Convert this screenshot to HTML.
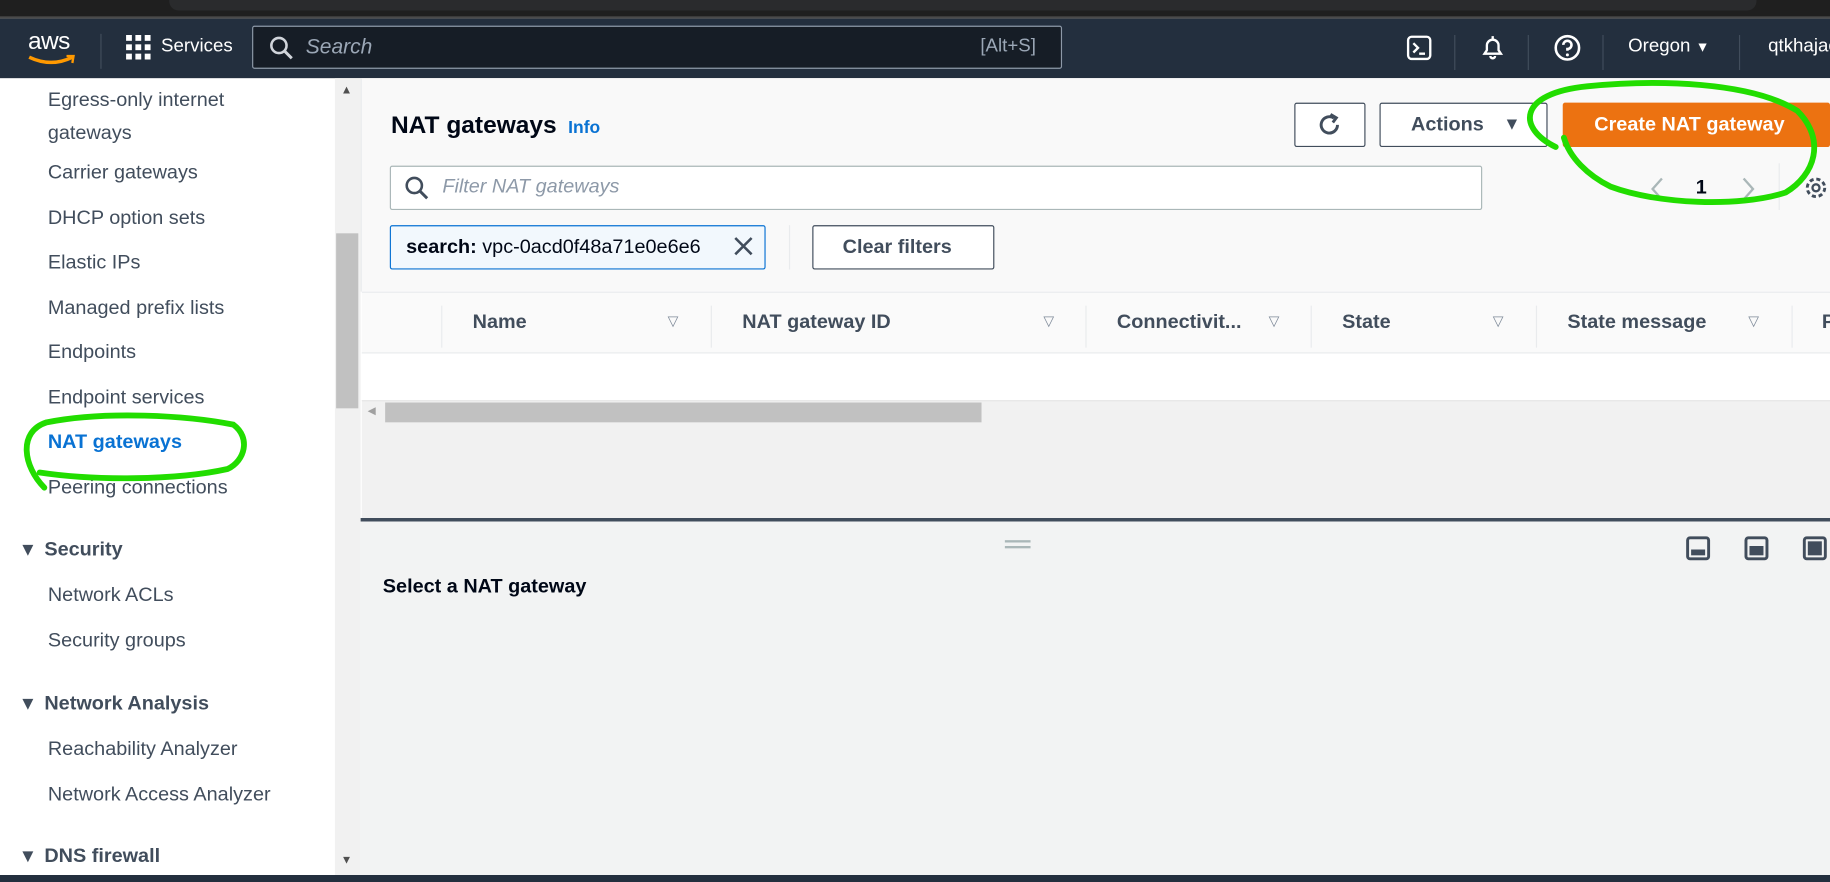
<!DOCTYPE html>
<html><head><meta charset="utf-8"><style>
*{box-sizing:border-box;margin:0;padding:0}
html,body{width:1830px;height:882px;overflow:hidden;background:#fff}
#w{position:absolute;left:0;top:0;width:1568px;height:756px;transform:scale(1.16709,1.16667);transform-origin:0 0;font-family:"Liberation Sans",sans-serif;overflow:hidden}
.a{position:absolute}
.side{font-size:17px;color:#414d5c;white-space:nowrap}
.hd{font-size:17px;color:#414d5c;font-weight:bold;white-space:nowrap}
.hd span{font-size:16px;display:inline-block;width:22px}
.th{font-size:17px;color:#414d5c;font-weight:bold;top:266px;white-space:nowrap}
.tri{font-size:12px;color:#7d8998;top:268px}
.sep{width:1px;height:36px;background:#e9ebed;top:262px}
</style></head><body><div id="w">
<div class="a" style="left:0;top:0;width:1568px;height:16px;background:#1f1f1f"></div>
<div class="a" style="left:145px;top:0;width:1360px;height:9px;background:#2a2b2d;border-radius:0 0 8px 8px"></div>
<div class="a" style="left:0;top:14px;width:1568px;height:2px;background:#4a4a4a"></div>
<div class="a" style="left:0;top:16px;width:1568px;height:51px;background:#232f3e"></div>
<div class="a" style="left:24px;top:24px;color:#fff;font-size:21px;letter-spacing:-0.5px">aws</div>
<svg class="a" style="left:22px;top:46px" width="44" height="12"><path d="M3 3 Q22 12 40 3" stroke="#ff9900" stroke-width="3" fill="none"/><path d="M35 2 L41 2 L40 8" stroke="#ff9900" stroke-width="2" fill="none"/></svg>
<div class="a" style="left:86px;top:29px;width:1px;height:30px;background:#414d5c"></div>
<svg class="a" style="left:108px;top:30px" width="22" height="22" fill="#fff"><rect x="0" y="0" width="5" height="5"/><rect x="8" y="0" width="5" height="5"/><rect x="16" y="0" width="5" height="5"/><rect x="0" y="8" width="5" height="5"/><rect x="8" y="8" width="5" height="5"/><rect x="16" y="8" width="5" height="5"/><rect x="0" y="16" width="5" height="5"/><rect x="8" y="16" width="5" height="5"/><rect x="16" y="16" width="5" height="5"/></svg>
<div class="a" style="left:138px;top:31px;color:#fff;font-size:16px">Services</div>
<div class="a" style="left:216px;top:22px;width:694px;height:37px;background:#161d26;border:1px solid #8d99a8;border-radius:2px"></div>
<svg class="a" style="left:230px;top:30px" width="22" height="22"><circle cx="9" cy="9" r="6.5" stroke="#d1d5db" stroke-width="2.2" fill="none"/><path d="M14 14 L20 20" stroke="#d1d5db" stroke-width="2.5"/></svg>
<div class="a" style="left:262px;top:30px;color:#9ba7b6;font-size:18px;font-style:italic">Search</div>
<div class="a" style="left:840px;top:31px;color:#9ba7b6;font-size:16px">[Alt+S]</div>
<svg class="a" style="left:1205px;top:30px" width="22" height="22"><rect x="1.5" y="1.5" width="19" height="19" rx="3" stroke="#fff" stroke-width="2" fill="none"/><path d="M6 7 L10 11 L6 15 M11 16 H16" stroke="#fff" stroke-width="2" fill="none"/></svg>
<div class="a" style="left:1246px;top:30px;width:1px;height:30px;background:#414d5c"></div>
<svg class="a" style="left:1268px;top:29px" width="22" height="24"><path d="M4 17 L6 14 V10 A5 5 0 0 1 16 10 V14 L18 17 Z" stroke="#fff" stroke-width="2" fill="none"/><path d="M9 19 A2 2 0 0 0 13 19" stroke="#fff" stroke-width="2" fill="none"/><path d="M11 2 V5" stroke="#fff" stroke-width="2"/></svg>
<div class="a" style="left:1309px;top:30px;width:1px;height:30px;background:#414d5c"></div>
<svg class="a" style="left:1331px;top:29px" width="24" height="24"><circle cx="12" cy="12" r="10" stroke="#fff" stroke-width="2.2" fill="none"/><path d="M8.5 9.5 A3.5 3.5 0 1 1 12 13 V14.5" stroke="#fff" stroke-width="2.2" fill="none"/><circle cx="12" cy="18" r="1.3" fill="#fff"/></svg>
<div class="a" style="left:1373px;top:30px;width:1px;height:30px;background:#414d5c"></div>
<div class="a" style="left:1395px;top:31px;color:#fff;font-size:16px">Oregon <span style="font-size:12px">▼</span></div>
<div class="a" style="left:1490px;top:30px;width:1px;height:30px;background:#414d5c"></div>
<div class="a" style="left:1515px;top:31px;color:#fff;font-size:16px;white-space:nowrap">qtkhajac</div>
<div class="a" style="left:287px;top:67px;width:22px;height:683px;background:#f1f1f1"></div>
<div class="a" style="left:288px;top:200px;width:19px;height:150px;background:#c1c1c1"></div>
<div class="a" style="left:292px;top:72px;font-size:10px;color:#505050">▲</div>
<div class="a" style="left:292px;top:732px;font-size:10px;color:#505050">▼</div>
<div class="a side" style="left:41px;top:72px;line-height:28px">Egress-only internet<br>gateways</div>
<div class="a side" style="left:41px;top:138px">Carrier gateways</div>
<div class="a side" style="left:41px;top:177px">DHCP option sets</div>
<div class="a side" style="left:41px;top:215px">Elastic IPs</div>
<div class="a side" style="left:41px;top:254px">Managed prefix lists</div>
<div class="a side" style="left:41px;top:292px">Endpoints</div>
<div class="a side" style="left:41px;top:331px">Endpoint services</div>
<div class="a side" style="left:41px;top:369px;color:#0972d3;font-weight:bold">NAT gateways</div>
<div class="a side" style="left:41px;top:408px">Peering connections</div>
<div class="a hd" style="left:16px;top:461px"><span>▼</span>Security</div>
<div class="a hd" style="left:16px;top:593px"><span>▼</span>Network Analysis</div>
<div class="a hd" style="left:16px;top:724px"><span>▼</span>DNS firewall</div>
<div class="a side" style="left:41px;top:500px">Network ACLs</div>
<div class="a side" style="left:41px;top:539px">Security groups</div>
<div class="a side" style="left:41px;top:632px">Reachability Analyzer</div>
<div class="a side" style="left:41px;top:671px">Network Access Analyzer</div>
<div class="a" style="left:309px;top:67px;width:1259px;height:183px;background:#f9f9f9;border-left:1px solid #e9ebed"></div>
<div class="a" style="left:335px;top:96px;font-size:21px;font-weight:bold;color:#000716">NAT gateways <span style="font-size:15px;color:#0972d3;margin-left:4px">Info</span></div>
<div class="a" style="left:1109px;top:88px;width:61px;height:38px;border:1px solid #414d5c;border-radius:2px;background:#fff"></div>
<svg class="a" style="left:1127px;top:95px" width="24" height="24"><path d="M19 12 A7 7 0 1 1 16 6.3" stroke="#414d5c" stroke-width="2.5" fill="none"/><path d="M13 3 L18 6 L15 10" stroke="#414d5c" stroke-width="2.5" fill="none"/></svg>
<div class="a" style="left:1182px;top:88px;width:144px;height:38px;border:1px solid #414d5c;border-radius:2px;background:#fff"></div>
<div class="a" style="left:1209px;top:97px;font-size:17px;font-weight:bold;color:#414d5c">Actions</div>
<div class="a" style="left:1288px;top:98px;font-size:15px;color:#414d5c">▼</div>
<div class="a" style="left:1339px;top:88px;width:229px;height:38px;background:#ec7211;border-radius:2px"></div>
<div class="a" style="left:1366px;top:97px;font-size:17px;font-weight:bold;color:#fff;white-space:nowrap">Create NAT gateway</div>
<div class="a" style="left:334px;top:142px;width:936px;height:38px;border:1px solid #aab7b8;border-radius:2px;background:#fff"></div>
<svg class="a" style="left:346px;top:150px" width="22" height="22"><circle cx="9" cy="9" r="6.5" stroke="#414d5c" stroke-width="2.2" fill="none"/><path d="M14 14 L20 20" stroke="#414d5c" stroke-width="2.5"/></svg>
<div class="a" style="left:379px;top:150px;font-size:17px;font-style:italic;color:#8d99a8">Filter NAT gateways</div>
<svg class="a" style="left:1412px;top:150px" width="16" height="24"><path d="M12 3 L4 12 L12 21" stroke="#aab7b8" stroke-width="2" fill="none"/></svg>
<div class="a" style="left:1453px;top:151px;font-size:17px;font-weight:bold;color:#000716">1</div>
<svg class="a" style="left:1490px;top:150px" width="16" height="24"><path d="M4 3 L12 12 L4 21" stroke="#aab7b8" stroke-width="2" fill="none"/></svg>
<div class="a" style="left:1524px;top:140px;width:1px;height:40px;background:#e9ebed"></div>
<svg class="a" style="left:1544px;top:149px" width="24" height="24"><circle cx="12" cy="12" r="7.5" stroke="#414d5c" stroke-width="2.5" fill="none" stroke-dasharray="3.5 2.4"/><circle cx="12" cy="12" r="3" stroke="#414d5c" stroke-width="2" fill="none"/></svg>
<div class="a" style="left:334px;top:193px;width:322px;height:38px;border:1px solid #0972d3;border-radius:2px;background:#f2f8fd"></div>
<div class="a" style="left:348px;top:202px;font-size:17px;color:#000716;white-space:nowrap"><b>search:</b> vpc-0acd0f48a71e0e6e6</div>
<svg class="a" style="left:627px;top:201px" width="20" height="20"><path d="M3 3 L17 17 M17 3 L3 17" stroke="#414d5c" stroke-width="2.2"/></svg>
<div class="a" style="left:676px;top:193px;width:1px;height:38px;background:#e9ebed"></div>
<div class="a" style="left:696px;top:193px;width:156px;height:38px;border:1px solid #414d5c;border-radius:2px;background:#fff"></div>
<div class="a" style="left:722px;top:202px;font-size:17px;font-weight:bold;color:#414d5c">Clear filters</div>
<div class="a" style="left:310px;top:250px;width:1258px;height:53px;background:#fafafa;border-top:1px solid #e9ebed;border-bottom:1px solid #e9ebed"></div>
<div class="a sep" style="left:378px"></div><div class="a sep" style="left:609px"></div><div class="a sep" style="left:930px"></div><div class="a sep" style="left:1123px"></div><div class="a sep" style="left:1316px"></div><div class="a sep" style="left:1535px"></div>
<div class="a th" style="left:405px">Name</div><div class="a tri" style="left:572px">▽</div>
<div class="a th" style="left:636px">NAT gateway ID</div><div class="a tri" style="left:894px">▽</div>
<div class="a th" style="left:957px">Connectivit...</div><div class="a tri" style="left:1087px">▽</div>
<div class="a th" style="left:1150px">State</div><div class="a tri" style="left:1279px">▽</div>
<div class="a th" style="left:1343px">State message</div><div class="a tri" style="left:1498px">▽</div>
<div class="a th" style="left:1561px">P</div>
<div class="a" style="left:310px;top:303px;width:1258px;height:40px;background:#fff"></div>
<div class="a" style="left:310px;top:343px;width:1258px;height:102px;background:#f1f1f1;border-top:1px solid #e5e5e5"></div>
<div class="a" style="left:330px;top:345px;width:511px;height:17px;background:#c1c1c1"></div>
<div class="a" style="left:315px;top:347px;font-size:9px;color:#a0a0a0">◀</div>
<div class="a" style="left:309px;top:444px;width:1259px;height:3px;background:#414d5c"></div>
<div class="a" style="left:309px;top:447px;width:1259px;height:303px;background:#f2f3f3"></div>
<div class="a" style="left:861px;top:463px;width:22px;height:2px;background:#aab7b8"></div>
<div class="a" style="left:861px;top:468px;width:22px;height:2px;background:#aab7b8"></div>
<svg class="a" style="left:1444px;top:459px" width="124" height="24"><rect x="2" y="2" width="18" height="18" rx="2" stroke="#414d5c" stroke-width="2.5" fill="none"/><rect x="5" y="12" width="12" height="5" fill="#414d5c"/><rect x="52" y="2" width="18" height="18" rx="2" stroke="#414d5c" stroke-width="2.5" fill="none"/><rect x="55" y="9" width="12" height="8" fill="#414d5c"/><rect x="102" y="2" width="18" height="18" rx="2" stroke="#414d5c" stroke-width="2.5" fill="none"/><rect x="105" y="5" width="12" height="12" fill="#414d5c"/></svg>
<div class="a" style="left:328px;top:493px;font-size:17px;font-weight:bold;color:#000716">Select a NAT gateway</div>
<div class="a" style="left:0;top:750px;width:1568px;height:6px;background:#232f3e"></div>
<svg class="a" style="left:0;top:0" width="1568" height="756"><g stroke="#22dd00" stroke-width="5" fill="none" stroke-linecap="round">
<path d="M1333 126 C1300 110 1300 80 1360 74 C1420 68 1500 70 1540 95 C1565 120 1555 150 1530 165 C1490 178 1420 175 1380 160 C1360 150 1345 135 1340 118"/>
<path d="M38 418 C20 400 15 370 40 362 C90 352 160 356 200 364 C215 375 210 395 195 402 C150 412 80 412 34 405"/>
</g></svg>
</div></body></html>
